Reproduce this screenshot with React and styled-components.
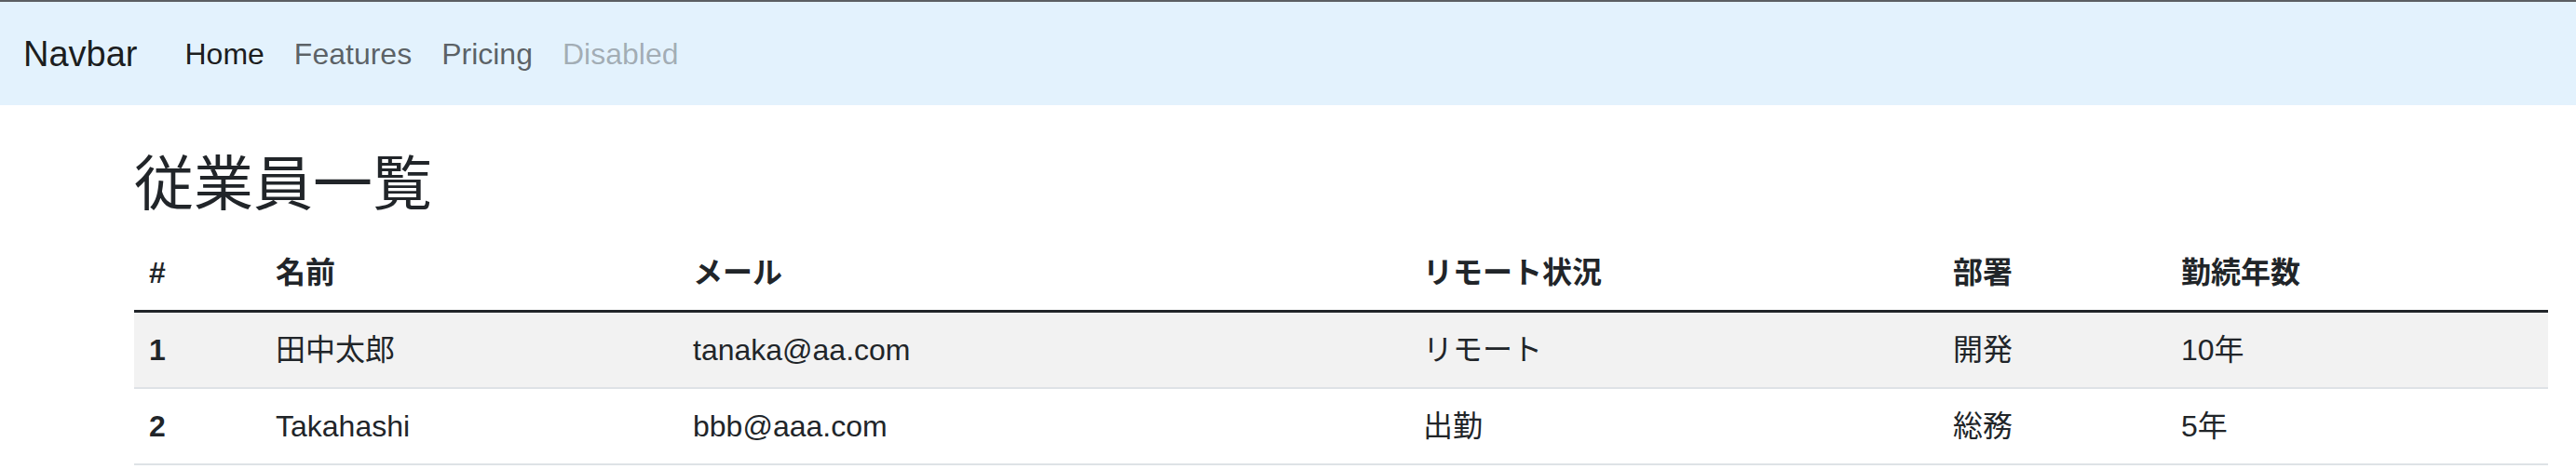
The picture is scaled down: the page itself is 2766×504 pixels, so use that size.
import React from 'react';
import styled, { createGlobalStyle } from 'styled-components';

const GlobalStyle = createGlobalStyle`
  html,
  body {
    margin: 0;
    padding: 0;
    background: #fff;
    color: #212529;
    font-family: 'Liberation Sans', 'Noto Sans CJK JP', Arial, sans-serif;
  }
`;

const Page = styled.div`
  border-top: 2px solid #5c5f63;
`;

const NavBar = styled.nav`
  display: flex;
  align-items: center;
  height: 111px;
  padding: 0 24px;
  background-color: #e3f2fd;
  box-sizing: border-box;
`;

const Brand = styled.a`
  font-size: 38px;
  line-height: 60px;
  color: rgba(0, 0, 0, 0.9);
  margin-right: 35px;
  margin-left: 1px;
  text-decoration: none;
`;

const NavList = styled.ul`
  display: flex;
  list-style: none;
  margin: 0;
  padding: 0;
`;

const NavLink = styled.a`
  display: block;
  padding: 16px;
  font-size: 32px;
  line-height: 48px;
  text-decoration: none;
  color: ${({ $state }) =>
    $state === 'active'
      ? 'rgba(0, 0, 0, 0.9)'
      : $state === 'disabled'
      ? 'rgba(0, 0, 0, 0.3)'
      : 'rgba(0, 0, 0, 0.62)'};
`;

const Container = styled.main`
  padding: 47px 30px 0 144px;
`;

const Title = styled.h2`
  margin: 0 0 16px;
  font-size: 64px;
  font-weight: 400;
  line-height: 1.2;
  color: #212529;
`;

const Table = styled.table`
  width: 2592px;
  border-collapse: collapse;
  table-layout: fixed;
  font-size: 32px;
  line-height: 48px;
`;

const HeadCell = styled.th`
  text-align: left;
  vertical-align: middle;
  font-weight: 700;
  padding: 16px;
  border-bottom: 3px solid #212529;
`;

const Row = styled.tr`
  background-color: ${({ $striped }) => ($striped ? '#f2f2f2' : '#fff')};
  border-bottom: 2px solid #dee2e6;
`;

const Cell = styled.td`
  padding: 16px;
  font-weight: ${({ $bold }) => ($bold ? 700 : 400)};
  white-space: nowrap;
`;

const columns = [
  { key: 'id', label: '#', width: 136 },
  { key: 'name', label: '名前', width: 448 },
  { key: 'mail', label: 'メール', width: 784 },
  { key: 'remote', label: 'リモート状況', width: 569 },
  { key: 'dept', label: '部署', width: 245 },
  { key: 'years', label: '勤続年数', width: 410 },
];

const employees = [
  { id: 1, name: '田中太郎', mail: 'tanaka@aa.com', remote: 'リモート', dept: '開発', years: '10年' },
  { id: 2, name: 'Takahashi', mail: 'bbb@aaa.com', remote: '出勤', dept: '総務', years: '5年' },
];

const navItems = [
  { label: 'Home', state: 'active' },
  { label: 'Features' },
  { label: 'Pricing' },
  { label: 'Disabled', state: 'disabled' },
];

export default function App() {
  return (
    <Page>
      <GlobalStyle />
      <NavBar>
        <Brand href="#">Navbar</Brand>
        <NavList>
          {navItems.map(item => (
            <li key={item.label}>
              <NavLink href="#" $state={item.state}>
                {item.label}
              </NavLink>
            </li>
          ))}
        </NavList>
      </NavBar>

      <Container>
        <Title>従業員一覧</Title>
        <Table>
          <colgroup>
            {columns.map(col => (
              <col key={col.key} style={{ width: col.width }} />
            ))}
          </colgroup>
          <thead>
            <tr>
              {columns.map(col => (
                <HeadCell key={col.key}>{col.label}</HeadCell>
              ))}
            </tr>
          </thead>
          <tbody>
            {employees.map((emp, i) => (
              <Row key={emp.id} $striped={i % 2 === 0}>
                {columns.map(col => (
                  <Cell key={col.key} $bold={col.key === 'id'}>
                    {emp[col.key]}
                  </Cell>
                ))}
              </Row>
            ))}
          </tbody>
        </Table>
      </Container>
    </Page>
  );
}
